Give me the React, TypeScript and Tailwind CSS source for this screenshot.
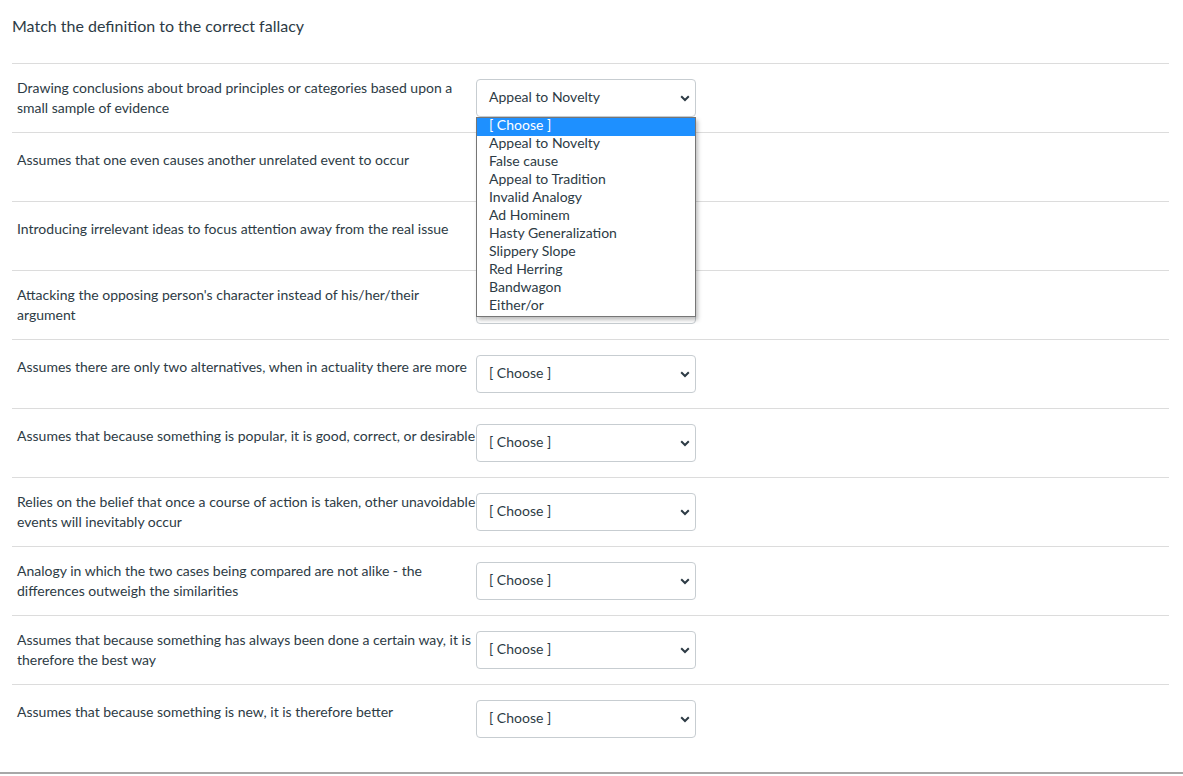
import React from 'react';

const options = [
  'Appeal to Novelty',
  'False cause',
  'Appeal to Tradition',
  'Invalid Analogy',
  'Ad Hominem',
  'Hasty Generalization',
  'Slippery Slope',
  'Red Herring',
  'Bandwagon',
  'Either/or',
];

const rows = [
  { text: 'Drawing conclusions about broad principles or categories based upon a small sample of evidence', two: true, value: 'Appeal to Novelty' },
  { text: 'Assumes that one even causes another unrelated event to occur', two: false },
  { text: 'Introducing irrelevant ideas to focus attention away from the real issue', two: false },
  { text: "Attacking the opposing person's character instead of his/her/their argument", two: true },
  { text: 'Assumes there are only two alternatives, when in actuality there are more', two: false },
  { text: 'Assumes that because something is popular, it is good, correct, or desirable', two: false },
  { text: 'Relies on the belief that once a course of action is taken, other unavoidable events will inevitably occur', two: true },
  { text: 'Analogy in which the two cases being compared are not alike - the differences outweigh the similarities', two: true },
  { text: 'Assumes that because something has always been done a certain way, it is therefore the best way', two: true },
  { text: 'Assumes that because something is new, it is therefore better', two: false },
];

function Chevron() {
  return (
    <svg width="10" height="7" viewBox="0 0 10 7" className="text-[#2d3b45]">
      <path d="M1.2 1.3 L5 5 L8.8 1.3" fill="none" stroke="currentColor" strokeWidth="2" />
    </svg>
  );
}

function FakeSelect({ value }: { value?: string }) {
  return (
    <div className="relative w-[220px] h-[38px] self-center bg-white border border-[#c7cdd1] rounded-[4px] flex items-center justify-between pl-3 pr-[5px] text-[14px] text-[#2d3b45]">
      <span className="pb-[2px] leading-[20px]">{value ?? '[ Choose ]'}</span>
      <Chevron />
    </div>
  );
}

export default function App() {
  return (
    <div className="min-h-[776px] bg-white font-['Lato','Liberation_Sans',sans-serif] text-[#2d3b45] flex flex-col">
      <div className="pl-3 pr-[14px]">
        <div className="h-[63px] pt-[16px] text-[16px] leading-[20px]">Match the definition to the correct fallacy</div>

        {rows.map((row, i) => (
          <div key={i} className="relative h-[69px] border-t border-[#dcdcdc] flex items-start">
            <div className={`w-[464px] pl-[5px] text-[14px] leading-[20px] ${row.two ? 'pt-[14px]' : 'pt-[17px]'}`}>
              {row.text}
            </div>
            <div className="h-[68px] flex items-center">
              <FakeSelect value={row.value} />
            </div>

            {i === 0 && (
              <div className="absolute left-[464px] top-[53px] w-[220px] z-10 bg-white border border-[#767676] shadow-[2px_3px_4px_rgba(0,0,0,0.25)] text-[14px] leading-[14px]">
                <div className="bg-[#1e90ff] text-white pl-3 pb-[4px]">[ Choose ]</div>
                {options.map((o) => (
                  <div key={o} className="pl-3 pb-[4px] text-[#2d3b45]">{o}</div>
                ))}
              </div>
            )}
          </div>
        ))}
      </div>
      <div className="mt-auto mb-[2px] h-[2px] bg-[#a8a8a8]" />
    </div>
  );
}
